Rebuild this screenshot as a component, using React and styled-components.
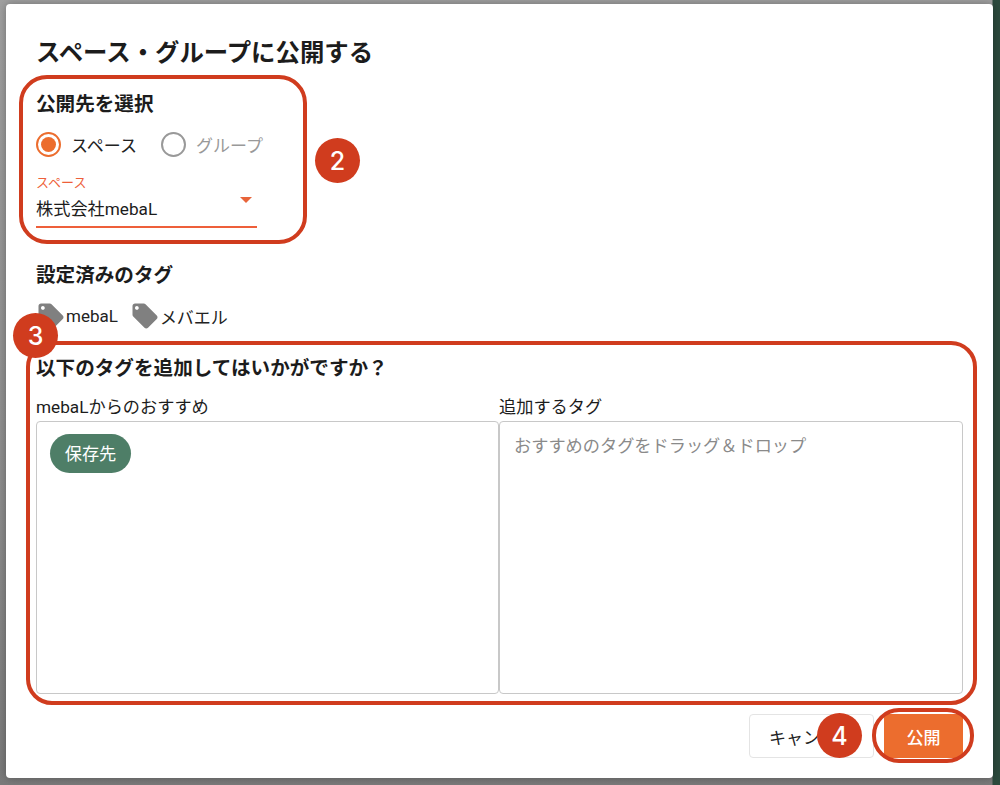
import React from 'react';
import styled, { createGlobalStyle } from 'styled-components';
import { MdLocalOffer } from 'react-icons/md';

const GlobalStyle = createGlobalStyle`
  html, body {
    margin: 0;
    height: 100%;
  }
  body {
    background: #8f8f8f;
    font-family: Roboto, "Noto Sans CJK JP", sans-serif;
    color: #1c1c1c;
    overflow: hidden;
  }
`;

const Backdrop = styled.div`
  width: 1000px;
  height: 785px;
  box-sizing: border-box;
  padding: 4px 7px 7px 6px;
  background:
    linear-gradient(to right, transparent 0, transparent 992px, #2c4a3d 993px),
    linear-gradient(to bottom, #a0a0a0 0, #8c8c8c 500px, #7a7a7a 100%);
`;

const Dialog = styled.section`
  position: relative;
  box-sizing: border-box;
  height: 100%;
  background: #fff;
  border-radius: 4px;
  padding: 34px 30px 0;
  display: flex;
  flex-direction: column;
  box-shadow: 0 0 8px rgba(0, 0, 0, 0.3);
`;

const Title = styled.h1`
  margin: 0;
  font-size: 24.4px;
  line-height: 30px;
  font-weight: 700;
`;

const SectionTitle = styled.h2`
  margin: ${(props) => props.$margin || '0'};
  font-size: 19.6px;
  line-height: 24px;
  font-weight: 700;
`;

const RadioRow = styled.div`
  display: flex;
  gap: 24px;
  margin-top: 14px;
  height: 26px;
`;

const RadioLabel = styled.label`
  display: flex;
  align-items: center;
  gap: 10px;
  font-size: 17px;
  color: ${(props) => (props.$checked ? '#222' : '#999')};
`;

const RadioMark = styled.span`
  box-sizing: border-box;
  width: 25px;
  height: 25px;
  border-radius: 50%;
  border: 2px solid ${(props) => (props.$checked ? '#ec6d2e' : '#999')};
  display: flex;
  align-items: center;
  justify-content: center;
  &::after {
    content: '';
    display: ${(props) => (props.$checked ? 'block' : 'none')};
    width: 15px;
    height: 15px;
    border-radius: 50%;
    background: #ec6d2e;
  }
`;

const SelectField = styled.div`
  position: relative;
  width: 221px;
  margin-top: 18px;
  height: 53px;
  box-sizing: border-box;
  border-bottom: 2px solid #ee5f3a;
`;

const SelectLabel = styled.div`
  font-size: 13px;
  line-height: 16px;
  color: #ee5f3a;
`;

const SelectValue = styled.div`
  font-size: 17.2px;
  line-height: 24px;
  margin-top: 6px;
`;

const SelectArrow = styled.span`
  position: absolute;
  right: 5px;
  top: 22px;
  width: 0;
  height: 0;
  border-left: 6px solid transparent;
  border-right: 6px solid transparent;
  border-top: 6px solid #e8643a;
`;

const TagRow = styled.div`
  display: flex;
  align-items: center;
  gap: 12px;
  margin-top: 13px;
  height: 30px;
  font-size: 17px;
`;

const Tag = styled.span`
  display: flex;
  align-items: center;
  color: #222;
  svg {
    color: #808080;
  }
`;

const Columns = styled.div`
  display: grid;
  grid-template-columns: 463px 464px;
  margin-top: 14px;
`;

const Column = styled.div`
  display: flex;
  flex-direction: column;
`;

const ColumnLabel = styled.div`
  font-size: 17.2px;
  line-height: 24px;
  height: 26px;
`;

const DropBox = styled.div`
  box-sizing: border-box;
  height: 273px;
  border: 1px solid #c8c8c8;
  border-radius: 4px;
  padding: 12px ${(props) => (props.$hint ? '14px' : '13px')};
  font-size: 17.2px;
  line-height: 24px;
  color: #8a8a8a;
`;

const Chip = styled.span`
  display: inline-flex;
  align-items: center;
  justify-content: center;
  width: 81px;
  height: 39px;
  border-radius: 20px;
  background: #4e7e67;
  color: #fff;
  font-size: 17.2px;
`;

const Footer = styled.div`
  display: flex;
  justify-content: flex-end;
  gap: 10px;
  margin-top: 20px;
`;

const Button = styled.button`
  box-sizing: border-box;
  height: 44px;
  border-radius: 4px;
  font-family: inherit;
  font-size: 17px;
  padding: 0;
  border: ${(props) => (props.$primary ? 'none' : '1px solid #e4e4e4')};
  background: ${(props) => (props.$primary ? '#ec6d2e' : '#fff')};
  color: ${(props) => (props.$primary ? '#fff' : '#222')};
  font-weight: ${(props) => (props.$primary ? 500 : 400)};
  width: ${(props) => (props.$primary ? '79px' : '125px')};
`;

const Callout = styled.div`
  position: absolute;
  box-sizing: border-box;
  left: ${(props) => props.$left}px;
  top: ${(props) => props.$top}px;
  width: ${(props) => props.$width}px;
  height: ${(props) => props.$height}px;
  border: 4px solid #d03c1e;
  border-radius: ${(props) => props.$radius}px;
  pointer-events: none;
`;

const Badge = styled.div`
  position: absolute;
  left: ${(props) => props.$left}px;
  top: ${(props) => props.$top}px;
  width: 45px;
  height: 45px;
  border-radius: 50%;
  background: #d03c1e;
  color: #fff;
  font-family: Inter, sans-serif;
  font-weight: 500;
  font-size: 25px;
  display: flex;
  align-items: center;
  justify-content: center;
`;

export default function App() {
  return (
    <>
      <GlobalStyle />
      <Backdrop>
        <Dialog>
          <Title>スペース・グループに公開する</Title>
          <SectionTitle $margin="25px 0 0">公開先を選択</SectionTitle>
          <RadioRow>
            <RadioLabel $checked>
              <RadioMark $checked />
              スペース
            </RadioLabel>
            <RadioLabel>
              <RadioMark />
              グループ
            </RadioLabel>
          </RadioRow>
          <SelectField>
            <SelectLabel>スペース</SelectLabel>
            <SelectValue>株式会社mebaL</SelectValue>
            <SelectArrow />
          </SelectField>
          <SectionTitle $margin="36px 0 0">設定済みのタグ</SectionTitle>
          <TagRow>
            <Tag>
              <MdLocalOffer size={30} />
              mebaL
            </Tag>
            <Tag>
              <MdLocalOffer size={30} />
              メバエル
            </Tag>
          </TagRow>
          <SectionTitle $margin="26px 0 0">以下のタグを追加してはいかがですか？</SectionTitle>
          <Columns>
            <Column>
              <ColumnLabel>mebaLからのおすすめ</ColumnLabel>
              <DropBox>
                <Chip>保存先</Chip>
              </DropBox>
            </Column>
            <Column>
              <ColumnLabel>追加するタグ</ColumnLabel>
              <DropBox $hint>おすすめのタグをドラッグ＆ドロップ</DropBox>
            </Column>
          </Columns>
          <Footer>
            <Button>キャンセル</Button>
            <Button $primary>公開</Button>
          </Footer>
          <Callout $left={13} $top={71} $width={288} $height={169} $radius={28} />
          <Callout $left={20} $top={337} $width={951} $height={364} $radius={26} />
          <Callout $left={866} $top={704} $width={102} $height={55} $radius={27} />
          <Badge $left={309} $top={134}>2</Badge>
          <Badge $left={7} $top={309}>3</Badge>
          <Badge $left={811} $top={709}>4</Badge>
        </Dialog>
      </Backdrop>
    </>
  );
}
